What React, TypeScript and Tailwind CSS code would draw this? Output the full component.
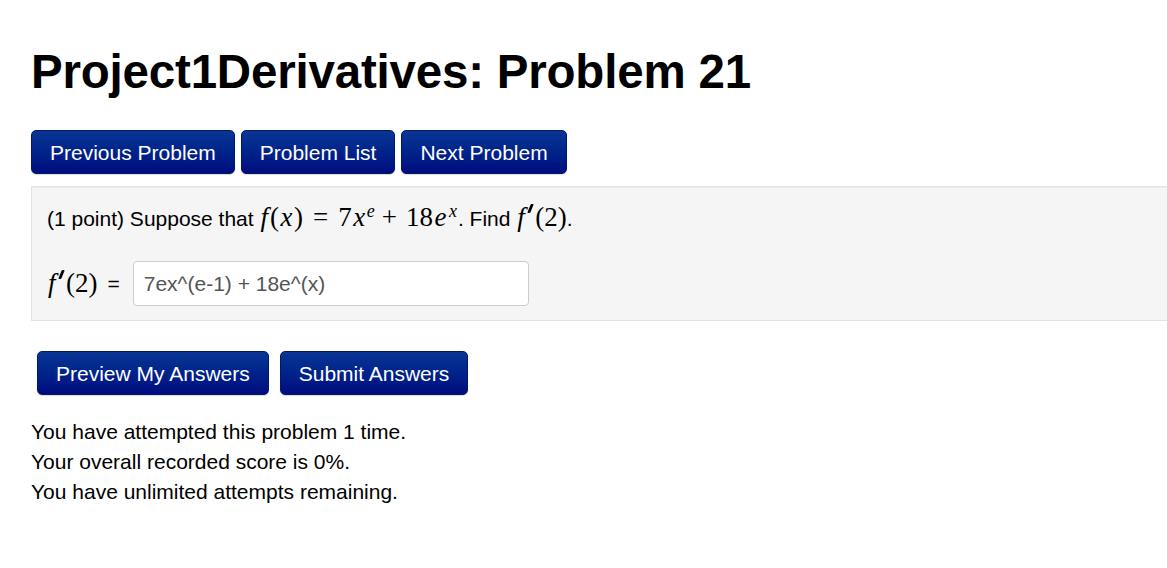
import React from "react";

const btn =
  "h-[44px] rounded-[5px] border border-[#001a66] bg-gradient-to-b from-[#0a3594] to-[#000a80] px-[18px] text-[21px] leading-none text-white shadow-[0_1px_1px_rgba(0,0,0,0.15)]";

const serif = '"Liberation Serif", "DejaVu Serif", serif';

function M({ children }: { children: React.ReactNode }) {
  return (
    <span className="text-[27px]" style={{ fontFamily: serif }}>
      {children}
    </span>
  );
}

function V({ c }: { c: string }) {
  return <i className="px-[1.5px]">{c}</i>;
}

function FPrime() {
  return (
    <>
      <i className="pl-[1px] pr-[1px]">f</i>
      <span className="relative top-[-13px] mx-[3px] inline-block h-[9px] w-[2.5px] -skew-x-[22deg] rounded-[1px] bg-black" />
      <span className="pl-[1px]">(2)</span>
    </>
  );
}

export default function App() {
  return (
    <div
      className="min-h-[568px] w-[1167px] overflow-hidden bg-white pl-[31px] text-black"
      style={{ fontFamily: '"Liberation Sans", Arial, sans-serif' }}
    >
      <h1 className="pt-[44px] text-[47.5px] font-bold leading-[56px] tracking-[-0.2px]">
        Project1Derivatives: Problem 21
      </h1>
      <div className="mt-[30px] flex gap-[6px]">
        <button className={btn}>Previous Problem</button>
        <button className={btn}>Problem List</button>
        <button className={btn}>Next Problem</button>
      </div>
      <div className="mt-[12px] w-[1200px] border border-[#e3e3e3] bg-[#f5f5f5] pb-[14px] pl-[15px] pt-[14px] shadow-[inset_0_1px_1px_rgba(0,0,0,0.05)]">
        <p className="text-[21px] leading-[32px]">
          (1 point) Suppose that{" "}
          <M>
            <i className="pl-[1px] pr-[2px]">f</i>(<V c="x" />)
            <span className="mx-[10px]">=</span>7<V c="x" />
            <sup className="text-[18px]"><i>e</i></sup>
            <span className="ml-[7px] mr-[9px]">+</span>18<V c="e" />
            <sup className="text-[18px]"><i className="px-[1px]">x</i></sup>
          </M>
          . Find{" "}
          <M>
            <FPrime />
          </M>
          .
        </p>
        <div className="mt-[26px] flex items-center">
          <M>
            <FPrime />
          </M>
          <span className="ml-[10px] text-[21px]">=</span>
          <input
            readOnly
            value="7ex^(e-1) + 18e^(x)"
            className="ml-[13px] h-[45px] w-[396px] rounded-[4px] border border-[#cccccc] bg-white px-[10px] text-[21px] text-[#555555] outline-none"
            style={{ fontFamily: '"Liberation Sans", Arial, sans-serif' }}
          />
        </div>
      </div>
      <div className="mt-[30px] flex gap-[11px] pl-[6px]">
        <button className={btn}>Preview My Answers</button>
        <button className={btn}>Submit Answers</button>
      </div>
      <div className="mt-[22px] text-[21px] leading-[30px]">
        <div>You have attempted this problem 1 time.</div>
        <div>Your overall recorded score is 0%.</div>
        <div>You have unlimited attempts remaining.</div>
      </div>
    </div>
  );
}
